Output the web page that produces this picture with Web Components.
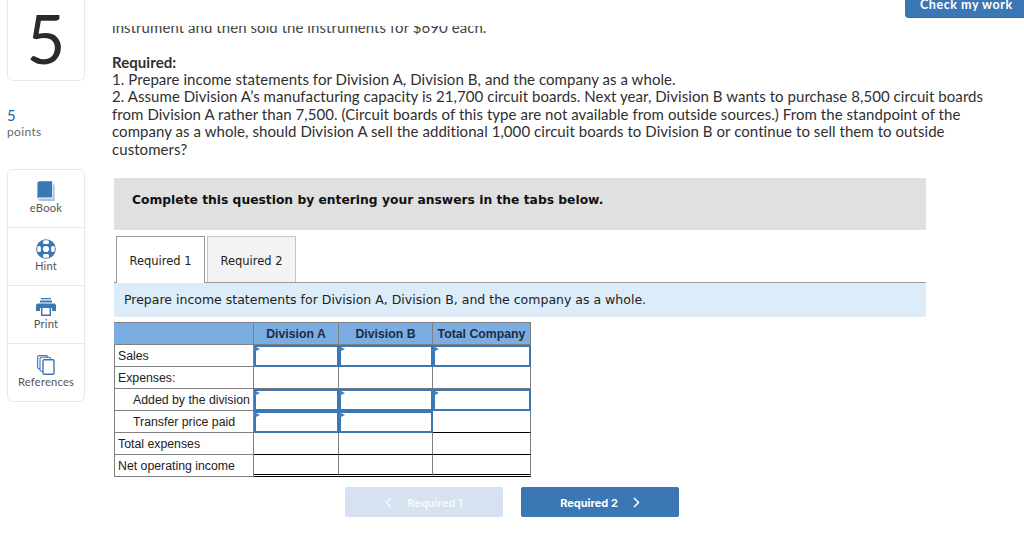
<!DOCTYPE html>
<html><head><meta charset="utf-8"><title>Question</title>
<style>
html,body{margin:0;padding:0;background:#fff}
body{width:1024px;height:559px;overflow:hidden;font-family:"Lato","Liberation Sans",sans-serif;color:#333}
exam-page{display:flex;height:559px}
</style></head>
<body>
<exam-page>
  <exam-rail></exam-rail>
  <exam-main></exam-main>
</exam-page>
<script>
function def(name,html,init){
  customElements.define(name,class extends HTMLElement{
    constructor(){super();const r=this.attachShadow({mode:"open"});r.innerHTML=html;if(init)init.call(this,r);}
  });
}
const ICONS={
 book:`<svg width="18" height="20" viewBox="0 0 18 20"><path d="M2.5 17.6H16V3.500h1.600V20H3.500A2.600 2.600 0 0 1 1 18h1.500z" fill="#a9c3e0"/><path d="M.4 2.200A2 2 0 0 1 2.400.3h12.800v16.200H2.400c-1 0-1.700.3-2 .9z" fill="#3b76b5"/></svg>`,
 hint:`<svg width="20" height="20" viewBox="0 0 20 20"><circle cx="10" cy="10" r="9.800" fill="#3b76b5"/><circle cx="10" cy="10" r="3.100" fill="#fff"/><g fill="#fff"><rect x="7" y="1.300" width="6" height="3.600" rx="1.500"/><rect x="7" y="15.100" width="6" height="3.600" rx="1.500"/><rect x="1.300" y="7" width="3.600" height="6" rx="1.500"/><rect x="15.100" y="7" width="3.600" height="6" rx="1.500"/></g></svg>`,
 print:`<svg width="20" height="18" viewBox="0 0 20 18"><path d="M5 0h10v1.200H5zM4 2.400h12v2.200H4z" fill="#3b76b5"/><path d="M2 5.400h16a2 2 0 0 1 2 2V13h-4V10H4v3H0V7.400a2 2 0 0 1 2-2z" fill="#3b76b5"/><path d="M5 10h10v8H5z" fill="#3b76b5"/><path d="M6.500 10h7v6.500h-7z" fill="#fff"/></svg>`,
 refs:`<svg width="18" height="20" viewBox="0 0 18 20" fill="#fff" stroke="#3b76b5" stroke-width="1.100"><rect x=".6" y=".6" width="10" height="13" rx="1.400"/><rect x="3" y="2.200" width="10.400" height="14" rx="1.400"/><rect x="6" y="4.800" width="11" height="14.500" rx="1.200" stroke-width="1.400"/></svg>`
};
def("score-card",`<style>:host{display:flex;box-sizing:border-box;width:78px;height:82px;margin-top:-1px;border:1px solid #e9e9e9;border-radius:0 0 6px 6px;justify-content:center;align-items:flex-start;font:400 67px/76px Lato,sans-serif;color:#2b2b2b}</style><slot></slot>`);
def("point-label",`<style>:host{display:block;margin-top:23px;height:65px;font-family:Lato,sans-serif}.n{font-size:15px;line-height:18px;color:#2d5f9c;padding-top:2px}.p{font-size:12px;line-height:15px;color:#666;letter-spacing:.35px}</style><div class="n">5</div><div class="p">points</div>`);
def("tool-item",`<style>:host{display:flex;flex-direction:column;align-items:center;height:58px;box-sizing:border-box;border-bottom:1px solid #e9e9e9;font:11.2px/14px Lato,sans-serif;color:#555;letter-spacing:.2px}:host(:last-child){border-bottom:0;height:57px}.i{height:21px;margin-top:10px;display:flex;align-items:center;justify-content:center}svg{display:block}</style><div class="i"></div><slot></slot>`,function(r){queueMicrotask(()=>{r.querySelector(".i").innerHTML=ICONS[this.getAttribute("icon")]||""})});
def("tool-card",`<style>:host{display:block;box-sizing:border-box;width:78px;height:233px;border:1px solid #e9e9e9;border-radius:6px}</style><slot></slot>`);
def("exam-rail",`<style>:host{display:block;box-sizing:border-box;width:105px;padding-left:7px;flex:none}</style>
<score-card>5</score-card><point-label></point-label>
<tool-card><tool-item icon="book">eBook</tool-item><tool-item icon="hint">Hint</tool-item><tool-item icon="print">Print</tool-item><tool-item icon="refs">References</tool-item></tool-card>`);
def("check-button",`<style>:host{display:block;box-sizing:border-box;width:119px;height:18px;padding-left:15px;background:#3b76b5;border-radius:0 0 0 4px;border-bottom:1px solid #2f66a3;color:#fff;font:700 12.5px/9px Lato,sans-serif;letter-spacing:.55px;overflow:hidden;white-space:nowrap}</style><slot></slot>`);
def("question-text",`<style>:host{display:block;margin-left:7px;font:15px/17.4px Lato,sans-serif;letter-spacing:.06px;color:#2f2f2f;white-space:nowrap}
.clip{height:10px;overflow:hidden;line-height:3.4px;color:#444}
.gap{height:17.5px}b{font-weight:700}</style>
<div class="clip">instrument and then sold the instruments for $690 each.</div><div class="gap"></div>
<b>Required:</b><br>1. Prepare income statements for Division A, Division B, and the company as a whole.<br>2. Assume Division A’s manufacturing capacity is 21,700 circuit boards. Next year, Division B wants to purchase 8,500 circuit boards<br>from Division A rather than 7,500. (Circuit boards of this type are not available from outside sources.) From the standpoint of the<br>company as a whole, should Division A sell the additional 1,000 circuit boards to Division B or continue to sell them to outside<br>customers?`);
def("notice-bar",`<style>:host{display:block;box-sizing:border-box;width:812px;height:52px;margin:20.5px 0 0 9px;padding:14px 0 0 18px;background:#e0e0e0;font:700 12.3px/16px "DejaVu Sans",sans-serif;color:#111;white-space:nowrap}</style><slot></slot>`);
def("tab-bar",`<style>:host{display:flex;gap:2px;box-sizing:border-box;width:812px;height:52px;margin:6px 0 0 9px;padding-left:2px;font:11.5px/16px "DejaVu Sans",sans-serif;color:#222;align-items:flex-start}
.t{box-sizing:border-box;width:89px;height:46px;text-align:center;padding-top:16px;border:1px solid #c4c4c4;background:#f3f3f3;border-bottom:0}
.a{background:#fff;border-color:#999;position:relative;z-index:1;height:47px}</style>
<div class="t a">Required 1</div><div class="t">Required 2</div>`);
def("prompt-bar",`<style>:host{display:block;box-sizing:border-box;width:812px;height:35px;margin:-6px 0 0 9px;padding:9px 0 0 10px;border-top:1px solid #9a9a9a;background:#dcecf8;font:12.5px/16px "DejaVu Sans",sans-serif;color:#222;white-space:nowrap}</style><slot></slot>`);
const ROWS=[["Sales",0,1,1,1,"#4a4a4a"],["Expenses:",0,0,0,0,"#777"],["Added by the division",1,1,1,1,"#777"],["Transfer price paid",1,1,1,0,"#000"],["Total expenses",0,0,0,0,"#000"],["Net operating income",0,0,0,0,"#000"]];
let cells=`<div class="c h"></div><div class="c h">Division A</div><div class="c h">Division B</div><div class="c h">Total Company</div>`;
ROWS.forEach((r,i)=>{
  cells+=`<div class="c l${r[1]?" ind":""}">${r[0]}</div>`;
  for(let k=2;k<5;k++){
    const last=i==5;
    cells+=`<div class="c v${last?" dbl":""}" style="border-bottom-color:${r[5]}">${r[k]?'<i class="in"></i>':''}</div>`;
  }
});
def("work-table",`<style>:host{display:grid;grid-template-columns:140px 85px 94px 98px;grid-template-rows:23px repeat(6,22px);width:417px;margin:5px 0 0 9px;font:12.3px/1 "Liberation Sans",sans-serif;color:#222}
.c{box-sizing:border-box;border-right:1px solid #808080;border-bottom:1px solid #808080;position:relative;display:flex;align-items:center;white-space:nowrap}
.h{background:#7aaee3;justify-content:center;font-weight:700;font-size:12.3px;color:#1d2c40;border-top:1px solid #808080}
.h:first-child,.l{border-left:1px solid #808080}
.l{padding-left:3px;color:#222}.ind{padding-left:18px}
.v:nth-child(4n+2){border-right-color:#aaa}
.dbl{border-bottom:3px double #000!important}
.in{display:block;position:absolute;left:0;top:0;right:-1px;bottom:-1px;border:2px solid #3b76b5;box-sizing:border-box}
.in::before{content:"";position:absolute;left:-2px;top:-1px;border-left:6px solid #3f80c9;border-top:3.5px solid transparent;border-bottom:3.5px solid transparent}
</style>${cells}`);
def("nav-button",`<style>:host{display:flex;box-sizing:border-box;width:158px;height:30px;align-items:center;justify-content:center;gap:15px;border-radius:2px;background:#3b76b5;color:#fff;font:700 11px/14px Inter,sans-serif}
:host([off]){background:#d6e2f0;color:#f4f7fb}svg{display:block}span{padding-top:1px}</style>
<svg class="p" width="7" height="11" viewBox="0 0 7 11" fill="none" stroke="currentColor" stroke-width="1.5"><path d="M6 1 1.500 5.500 6 10"/></svg><span><slot></slot></span><svg class="n" width="7" height="11" viewBox="0 0 7 11" fill="none" stroke="currentColor" stroke-width="1.5"><path d="M1 1l4.500 4.500L1 10"/></svg>`,function(r){queueMicrotask(()=>{r.querySelector(this.hasAttribute("off")?".n":".p").remove()})});
def("nav-row",`<style>:host{display:flex;gap:18px;margin:10px 0 0 240px}</style><slot></slot>`);
def("exam-main",`<style>:host{display:block;flex:1;min-width:0}.top{display:flex;justify-content:flex-end;height:26px}</style>
<div class="top"><check-button>Check my work</check-button></div>
<question-text></question-text>
<notice-bar>Complete this question by entering your answers in the tabs below.</notice-bar>
<tab-bar></tab-bar>
<prompt-bar>Prepare income statements for Division A, Division B, and the company as a whole.</prompt-bar>
<work-table></work-table>
<nav-row><nav-button off>Required 1</nav-button><nav-button>Required 2</nav-button></nav-row>`);
</script>
</body></html>
